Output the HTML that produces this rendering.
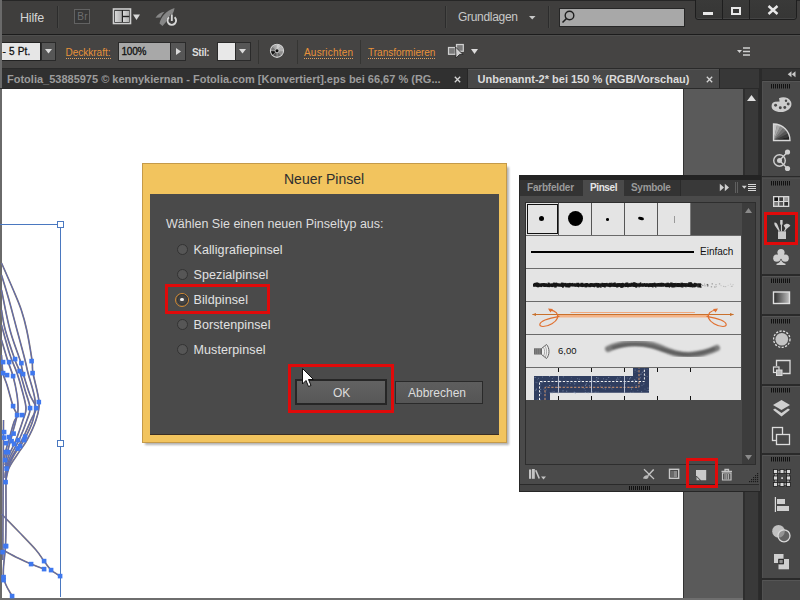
<!DOCTYPE html>
<html><head><meta charset="utf-8">
<style>
*{margin:0;padding:0;box-sizing:border-box}
html,body{width:800px;height:600px;overflow:hidden;background:#ffffff;font-family:"Liberation Sans",sans-serif;position:relative}
.a{position:absolute}
.t{position:absolute;white-space:nowrap;line-height:1}
svg{position:absolute;overflow:visible}
.ul{border-bottom:1px dotted #e0a060}
</style></head><body>
<!-- ============ MENU BAR ============ -->
<div class="a" style="left:0;top:0;width:800px;height:35px;background:#3f3e3d"></div>
<div class="a" style="left:0;top:0;width:800px;height:1px;background:#262626"></div>
<div class="a" style="left:0;top:34px;width:800px;height:1px;background:#1c1c1c"></div>
<div class="t" style="left:20px;top:12px;font-size:12.5px;color:#d4d4d4;letter-spacing:-0.2px">Hilfe</div>
<div class="a" style="left:57px;top:6px;width:1px;height:22px;background:#2c2c2c"></div>
<div class="a" style="left:58px;top:6px;width:1px;height:22px;background:#474745"></div>
<!-- Br -->
<div class="a" style="left:74px;top:9px;width:16px;height:15px;border:1px solid #626262;background:#373737"></div>
<div class="t" style="left:77.3px;top:12px;font-size:10px;color:#6e6e6e;letter-spacing:0.3px">Br</div>
<!-- layout icon -->
<svg style="left:0;top:0" width="200" height="34" viewBox="0 0 200 34">
<rect x="113.5" y="9" width="17" height="14.5" fill="#222" stroke="#cfcfcf" stroke-width="1.6"/>
<defs><linearGradient id="lp" x1="0" y1="0" x2="1" y2="0"><stop offset="0" stop-color="#d8d8d8"/><stop offset="1" stop-color="#b0b0b0"/></linearGradient></defs>
<rect x="115" y="10.8" width="6.8" height="11.2" fill="url(#lp)"/>
<rect x="123" y="10.8" width="6.2" height="5" fill="url(#lp)"/>
<rect x="123" y="17.2" width="6.2" height="4.8" fill="url(#lp)"/>
<path d="M133 14.5H140L136.5 20Z" fill="#d8d8d8"/>
<!-- rocket -->
<path d="M159.5 23.5 C161 17 165.5 11 174.5 8 C174 12.5 171 18 166 22 L162.5 26Z" fill="#868686"/>
<path d="M155.5 17.8 C157.5 14.5 160.5 12.5 164.5 11.8 C163 13.5 161.5 15.5 160.5 17.5Z" fill="#868686"/>
<circle cx="171.8" cy="21.3" r="5.6" fill="#3f3e3d"/>
<path d="M169 17.3 A4.3 4.3 0 1 0 174.6 17.3" fill="none" stroke="#d8d8d8" stroke-width="1.9"/>
<path d="M171.8 14.5V21" stroke="#3f3e3d" stroke-width="3.4"/>
<path d="M171.8 14.5V21" stroke="#d8d8d8" stroke-width="1.9"/>
</svg>
<!-- right side -->
<div class="a" style="left:445px;top:6px;width:1px;height:22px;background:#2c2c2c"></div>
<div class="a" style="left:446px;top:6px;width:1px;height:22px;background:#474745"></div>
<div class="t" style="left:458px;top:11px;font-size:12px;color:#c8c8c8;letter-spacing:-0.3px">Grundlagen</div>
<svg style="left:529px;top:16px" width="7" height="4"><path d="M0 0H6.5L3.25 3.5Z" fill="#c8c8c8"/></svg>
<div class="a" style="left:548px;top:6px;width:1px;height:22px;background:#2c2c2c"></div>
<div class="a" style="left:549px;top:6px;width:1px;height:22px;background:#474745"></div>
<div class="a" style="left:559px;top:8px;width:126px;height:19px;background:#a8a8a8;border:1px solid #262626"></div>
<svg style="left:561px;top:10px" width="16" height="15"><circle cx="8.5" cy="5.5" r="4.3" fill="none" stroke="#1e1e1e" stroke-width="1.4"/><path d="M5.5 8.5L1.5 12.5" stroke="#1e1e1e" stroke-width="1.6"/></svg>
<!-- window buttons -->
<div class="a" style="left:695px;top:-2px;width:102px;height:22px;background:linear-gradient(#3a3a39,#363635);border:1px solid #1e1e1e;border-radius:0 0 3px 3px;box-shadow:inset 0 -1px 0 #444"></div>
<div class="a" style="left:722px;top:0;width:1px;height:19px;background:#1e1e1e"></div>
<div class="a" style="left:749px;top:0;width:1px;height:19px;background:#1e1e1e"></div>
<div class="a" style="left:703px;top:12px;width:10px;height:3px;background:#e8e8e8"></div>
<div class="a" style="left:731px;top:7px;width:10px;height:8px;border:2px solid #e8e8e8"></div>
<svg style="left:767px;top:5px" width="12" height="10"><path d="M1.5 1L10.5 9M10.5 1L1.5 9" stroke="#e8e8e8" stroke-width="2.4"/></svg>

<!-- ============ CONTROL BAR ============ -->
<div class="a" style="left:0;top:35px;width:800px;height:33px;background:#454443;border-top:1px solid #4e4e4d"></div>
<div class="a" style="left:0;top:68px;width:800px;height:1px;background:#2a2a2a"></div>
<div class="a" style="left:0;top:42px;width:41px;height:19px;background:#e6e6e6;border:1px solid #222;border-left:none"></div>
<div class="t" style="left:2.5px;top:47px;font-size:10px;color:#111;-webkit-text-stroke:0.3px #111;letter-spacing:0.2px">- 5 Pt.</div>
<div class="a" style="left:41px;top:42px;width:15px;height:19px;background:#565656;border:1px solid #2a2a2a"></div>
<svg style="left:45px;top:49px" width="8" height="5"><path d="M0 0H7L3.5 4.5Z" fill="#dcdcdc"/></svg>
<div class="t ul" style="left:65.5px;top:47.9px;font-size:10px;color:#e8923a">Deckkraft:</div>
<div class="a" style="left:118px;top:42px;width:53px;height:19px;background:#a8a8a8;border:1px solid #2a2a2a"></div>
<div class="t" style="left:121.5px;top:47px;font-size:10px;color:#111;-webkit-text-stroke:0.3px #111;letter-spacing:-0.2px">100%</div>
<div class="a" style="left:170px;top:42px;width:16px;height:19px;background:#565656;border:1px solid #2a2a2a"></div>
<svg style="left:176px;top:48px" width="6" height="8"><path d="M0 0V7L5 3.5Z" fill="#dcdcdc"/></svg>
<div class="t" style="left:192px;top:47.9px;font-size:10px;color:#dcdcdc;font-weight:bold;letter-spacing:-0.3px">Stil:</div>
<div class="a" style="left:217px;top:42px;width:19px;height:19px;background:#e8e8e8;border:1px solid #2a2a2a"></div>
<div class="a" style="left:235px;top:42px;width:16px;height:19px;background:#565656;border:1px solid #2a2a2a"></div>
<svg style="left:239px;top:49px" width="8" height="5"><path d="M0 0H7L3.5 4.5Z" fill="#dcdcdc"/></svg>
<div class="a" style="left:258px;top:40px;width:1px;height:24px;background:#353533"></div>
<svg style="left:0;top:0" width="300" height="68" viewBox="0 0 300 68">
<defs><clipPath id="rcc"><circle cx="277" cy="50.8" r="6.3"/></clipPath></defs>
<circle cx="277" cy="50.8" r="7.2" fill="#2a2a2a"/>
<g clip-path="url(#rcc)">
<path d="M277 50.8L277 43L284 43Z" fill="#c8c8c8"/><path d="M277 50.8L284 43L285 51Z" fill="#b0b0b0"/>
<path d="M277 50.8L285 51L284 58Z" fill="#8c8c8c"/><path d="M277 50.8L284 58L277 59Z" fill="#6a6a6a"/>
<path d="M277 50.8L277 59L269 58Z" fill="#555"/><path d="M277 50.8L269 58L269 51Z" fill="#111"/>
<path d="M277 50.8L269 51L270 43Z" fill="#777"/><path d="M277 50.8L270 43L277 43Z" fill="#a8a8a8"/>
</g>
<g stroke="#e0e0e0" stroke-width="0.6" stroke-opacity="0.7"><path d="M277 44.5V57M270.7 50.8H283.3M272.5 46.3L281.5 55.3M281.5 46.3L272.5 55.3"/></g>
<circle cx="277" cy="50.8" r="6.6" fill="none" stroke="#d4d4d4" stroke-width="1.1"/>
<circle cx="277" cy="50.8" r="2" fill="#111" stroke="#ddd" stroke-width="0.8"/>
</svg>
<div class="a" style="left:297px;top:40px;width:1px;height:24px;background:#353533"></div>
<div class="t ul" style="left:304px;top:47.9px;font-size:10px;color:#e8923a;letter-spacing:0.2px">Ausrichten</div>
<div class="a" style="left:360px;top:40px;width:1px;height:24px;background:#353533"></div>
<div class="t ul" style="left:368px;top:47.9px;font-size:10px;color:#e8923a">Transformieren</div>
<svg style="left:0;top:0" width="500" height="68" viewBox="0 0 500 68">
<rect x="448.5" y="47.5" width="6.8" height="6.8" fill="#7a7a7a" stroke="#d0d0d0" stroke-width="1.2"/>
<rect x="456.5" y="44.5" width="6.8" height="6.8" fill="#7a7a7a" stroke="#d0d0d0" stroke-width="1.2"/>
<path d="M455.5 47 L463 54.5 L459.5 54.5 L456 58 Z" fill="#d0d0d0" stroke="#222" stroke-width="0.8"/>
</svg>
<svg style="left:471px;top:49px" width="8" height="6"><path d="M0 0H7L3.5 5Z" fill="#dcdcdc"/></svg>
<svg style="left:737px;top:47px" width="14" height="10" viewBox="0 0 14 10"><path d="M0 3H5L2.5 6Z" fill="#d0d0d0"/><path d="M6 1H13M6 4.5H13M6 8H13" stroke="#d0d0d0" stroke-width="1.3"/></svg>

<!-- ============ TAB BAR ============ -->
<div class="a" style="left:0;top:69px;width:762px;height:19px;background:#373737"></div>
<div class="a" style="left:0;top:69px;width:467px;height:19px;background:#303030"></div>
<div class="a" style="left:467px;top:69px;width:1px;height:19px;background:#262626"></div>
<div class="a" style="left:468px;top:69px;width:251px;height:19px;background:#484848;border-top:1px solid #525252"></div>
<div class="a" style="left:719px;top:69px;width:1px;height:19px;background:#262626"></div>
<div class="t" style="left:7px;top:74px;font-size:11px;color:#9c9c9c;font-weight:bold">Fotolia_53885975 © kennykiernan - Fotolia.com [Konvertiert].eps bei 66,67 % (RG...</div>
<svg style="left:453.5px;top:75.5px" width="8" height="7"><path d="M0.8 0.8L6.2 6.2M6.2 0.8L0.8 6.2" stroke="#d4d4d4" stroke-width="1.3"/></svg>
<div class="t" style="left:477.5px;top:74px;font-size:11px;color:#dcdcdc;font-weight:bold">Unbenannt-2* bei 150 % (RGB/Vorschau)</div>
<svg style="left:705.5px;top:75.5px" width="8" height="7"><path d="M0.8 0.8L6.2 6.2M6.2 0.8L0.8 6.2" stroke="#d4d4d4" stroke-width="1.3"/></svg>

<!-- ============ CANVAS ============ -->
<div class="a" style="left:0;top:89px;width:684px;height:511px;background:#ffffff"></div>
<div class="a" style="left:0;top:0;width:2px;height:600px;background:#6a6a6a"></div>
<div class="a" style="left:683px;top:89px;width:60px;height:511px;background:#5a5a5a"></div><div class="a" style="left:683px;top:89px;width:1px;height:511px;background:#333"></div>
<div class="a" style="left:743px;top:89px;width:16px;height:511px;background:#393939;border-left:2px solid #2e2e2e;border-right:1px solid #2c2c2c"></div><div class="a" style="left:0;top:88px;width:759px;height:1px;background:#2a2a2a"></div>
<svg style="left:747px;top:95px" width="10" height="7"><path d="M0 6H9L4.5 0Z" fill="#e0e0e0"/></svg>
<div class="a" style="left:759px;top:68px;width:3px;height:532px;background:#2b2b2b"></div>
<div class="a" style="left:0;top:598px;width:743px;height:2px;background:#6e6e6e"></div>

<!-- ============ RIGHT PANEL ============ -->
<svg style="left:0;top:0" width="800" height="600" viewBox="0 0 800 600">
<rect x="759" y="68" width="41" height="532" fill="#2a2a2a"/>
<rect x="762" y="69" width="38" height="11" fill="#333"/>
<path d="M791.5 71.3V77.3L787.7 74.3Z M795.5 71.3V77.3L791.7 74.3Z" fill="#c8c8c8"/>
<rect x="762" y="81" width="38" height="95" fill="#484848"/><rect x="762" y="81" width="38" height="1" fill="#555"/><rect x="762" y="81" width="1" height="95" fill="#505050"/>
<rect x="762" y="177.5" width="38" height="96.5" fill="#484848"/><rect x="762" y="177.5" width="38" height="1" fill="#555"/><rect x="762" y="177.5" width="1" height="96.5" fill="#505050"/>
<rect x="762" y="276" width="38" height="38" fill="#484848"/><rect x="762" y="276" width="38" height="1" fill="#555"/><rect x="762" y="276" width="1" height="38" fill="#505050"/>
<rect x="762" y="316" width="38" height="68" fill="#484848"/><rect x="762" y="316" width="38" height="1" fill="#555"/><rect x="762" y="316" width="1" height="68" fill="#505050"/>
<rect x="762" y="386" width="38" height="67" fill="#484848"/><rect x="762" y="386" width="38" height="1" fill="#555"/><rect x="762" y="386" width="1" height="67" fill="#505050"/>
<rect x="762" y="455" width="38" height="123" fill="#484848"/><rect x="762" y="455" width="38" height="1" fill="#555"/><rect x="762" y="455" width="1" height="123" fill="#505050"/>
<rect x="762" y="580" width="38" height="20" fill="#484848"/><rect x="762" y="580" width="38" height="1" fill="#555"/><rect x="762" y="580" width="1" height="20" fill="#505050"/>
<rect x="771" y="84" width="1" height="4.5" fill="#111"/><rect x="773" y="84" width="1" height="4.5" fill="#111"/><rect x="775" y="84" width="1" height="4.5" fill="#111"/><rect x="777" y="84" width="1" height="4.5" fill="#111"/><rect x="779" y="84" width="1" height="4.5" fill="#111"/><rect x="781" y="84" width="1" height="4.5" fill="#111"/><rect x="783" y="84" width="1" height="4.5" fill="#111"/><rect x="785" y="84" width="1" height="4.5" fill="#111"/><rect x="787" y="84" width="1" height="4.5" fill="#111"/><rect x="789" y="84" width="1" height="4.5" fill="#111"/>
<rect x="771" y="181" width="1" height="4.5" fill="#111"/><rect x="773" y="181" width="1" height="4.5" fill="#111"/><rect x="775" y="181" width="1" height="4.5" fill="#111"/><rect x="777" y="181" width="1" height="4.5" fill="#111"/><rect x="779" y="181" width="1" height="4.5" fill="#111"/><rect x="781" y="181" width="1" height="4.5" fill="#111"/><rect x="783" y="181" width="1" height="4.5" fill="#111"/><rect x="785" y="181" width="1" height="4.5" fill="#111"/><rect x="787" y="181" width="1" height="4.5" fill="#111"/><rect x="789" y="181" width="1" height="4.5" fill="#111"/>
<rect x="771" y="278.5" width="1" height="4.5" fill="#111"/><rect x="773" y="278.5" width="1" height="4.5" fill="#111"/><rect x="775" y="278.5" width="1" height="4.5" fill="#111"/><rect x="777" y="278.5" width="1" height="4.5" fill="#111"/><rect x="779" y="278.5" width="1" height="4.5" fill="#111"/><rect x="781" y="278.5" width="1" height="4.5" fill="#111"/><rect x="783" y="278.5" width="1" height="4.5" fill="#111"/><rect x="785" y="278.5" width="1" height="4.5" fill="#111"/><rect x="787" y="278.5" width="1" height="4.5" fill="#111"/><rect x="789" y="278.5" width="1" height="4.5" fill="#111"/>
<rect x="771" y="319" width="1" height="4.5" fill="#111"/><rect x="773" y="319" width="1" height="4.5" fill="#111"/><rect x="775" y="319" width="1" height="4.5" fill="#111"/><rect x="777" y="319" width="1" height="4.5" fill="#111"/><rect x="779" y="319" width="1" height="4.5" fill="#111"/><rect x="781" y="319" width="1" height="4.5" fill="#111"/><rect x="783" y="319" width="1" height="4.5" fill="#111"/><rect x="785" y="319" width="1" height="4.5" fill="#111"/><rect x="787" y="319" width="1" height="4.5" fill="#111"/><rect x="789" y="319" width="1" height="4.5" fill="#111"/>
<rect x="771" y="388" width="1" height="4.5" fill="#111"/><rect x="773" y="388" width="1" height="4.5" fill="#111"/><rect x="775" y="388" width="1" height="4.5" fill="#111"/><rect x="777" y="388" width="1" height="4.5" fill="#111"/><rect x="779" y="388" width="1" height="4.5" fill="#111"/><rect x="781" y="388" width="1" height="4.5" fill="#111"/><rect x="783" y="388" width="1" height="4.5" fill="#111"/><rect x="785" y="388" width="1" height="4.5" fill="#111"/><rect x="787" y="388" width="1" height="4.5" fill="#111"/><rect x="789" y="388" width="1" height="4.5" fill="#111"/>
<rect x="771" y="457" width="1" height="4.5" fill="#111"/><rect x="773" y="457" width="1" height="4.5" fill="#111"/><rect x="775" y="457" width="1" height="4.5" fill="#111"/><rect x="777" y="457" width="1" height="4.5" fill="#111"/><rect x="779" y="457" width="1" height="4.5" fill="#111"/><rect x="781" y="457" width="1" height="4.5" fill="#111"/><rect x="783" y="457" width="1" height="4.5" fill="#111"/><rect x="785" y="457" width="1" height="4.5" fill="#111"/><rect x="787" y="457" width="1" height="4.5" fill="#111"/><rect x="789" y="457" width="1" height="4.5" fill="#111"/>

<!-- palette -->
<path d="M779 98.3 C783 96.3 789 97.3 791 101.8 C792.6 106 790 110.5 783 111.9 C776 112.6 771.4 110 771.6 106 C771.7 103.5 773 102 775 101.8 L779.6 101.5 Z" fill="#cdcdcd"/>
<circle cx="775.6" cy="105.2" r="1.45" fill="#4a4a4a"/><circle cx="780.3" cy="107.7" r="1.45" fill="#4a4a4a"/><circle cx="784.8" cy="107.5" r="1.45" fill="#4a4a4a"/><circle cx="788.2" cy="104" r="1.45" fill="#4a4a4a"/><circle cx="786" cy="100.8" r="1.2" fill="#4a4a4a"/>
<!-- gradient quarter -->
<defs><linearGradient id="gq" x1="0" y1="1" x2="1" y2="0"><stop offset="0" stop-color="#111"/><stop offset="1" stop-color="#c8c8c8"/></linearGradient>
<linearGradient id="gr" x1="0" y1="0" x2="1" y2="0"><stop offset="0" stop-color="#2a2a2a"/><stop offset="1" stop-color="#c0c0c0"/></linearGradient></defs>
<path d="M773.5 140.5L790.00 140.50A16.5 16.5 0 0 0 789.59 136.83Z" fill="#222"/><path d="M773.5 140.5L789.59 136.83A16.5 16.5 0 0 0 788.37 133.34Z" fill="#3a3a3a"/><path d="M773.5 140.5L788.37 133.34A16.5 16.5 0 0 0 786.40 130.21Z" fill="#555"/><path d="M773.5 140.5L786.40 130.21A16.5 16.5 0 0 0 783.79 127.60Z" fill="#707070"/><path d="M773.5 140.5L783.79 127.60A16.5 16.5 0 0 0 780.66 125.63Z" fill="#8a8a8a"/><path d="M773.5 140.5L780.66 125.63A16.5 16.5 0 0 0 777.17 124.41Z" fill="#a8a8a8"/><path d="M773.5 140.5L777.17 124.41A16.5 16.5 0 0 0 773.50 124.00Z" fill="#c4c4c4"/><path d="M773.5 124V140.5H790 A16.5 16.5 0 0 0 773.5 124Z" fill="none" stroke="#d8d8d8" stroke-width="1.3"/>
<!-- graphic styles / symbol -->
<circle cx="779.5" cy="160.5" r="5.8" fill="none" stroke="#cfcfcf" stroke-width="1.4"/>
<circle cx="779.5" cy="160.5" r="2.5" fill="#cfcfcf"/>
<path d="M779.5 160.5L787.5 152M779.5 160.5L787.5 168.5" stroke="#cfcfcf" stroke-width="1.4"/>
<circle cx="787.5" cy="152" r="2.6" fill="#cfcfcf"/><circle cx="787.5" cy="168.5" r="2.6" fill="#cfcfcf"/>
<!-- swatches -->
<rect x="773" y="196" width="16.3" height="11" fill="#d6d6d6"/>
<rect x="774.3" y="197.3" width="3.7" height="3.7" fill="#141414"/><rect x="779.3" y="197.3" width="3.7" height="3.7" fill="#3a3a3a"/><rect x="784.3" y="197.3" width="3.7" height="3.7" fill="#9a9a9a"/>
<rect x="774.3" y="202" width="3.7" height="3.7" fill="#7a7a7a"/><rect x="779.3" y="202" width="3.7" height="3.7" fill="#555"/><rect x="784.3" y="202" width="3.7" height="3.7" fill="#303030"/>
<!-- brush selected -->
<rect x="765.5" y="213.5" width="31" height="30" fill="#353535" stroke="#e00a0a" stroke-width="3"/>
<rect x="778" y="231.3" width="8" height="7.7" fill="#c8c8c8"/>
<rect x="780.2" y="220" width="2.4" height="4.6" fill="#d0d0d0"/><rect x="780.9" y="224" width="1.1" height="7.5" fill="#c8c8c8"/>
<path d="M774.5 222.5 C776 222 777.5 224 778 226 L779.8 230.8 L778.8 231.2 L775.5 226.5 C774.5 225 774 223.5 774.5 222.5Z" fill="#cdcdcd"/>
<path d="M784 231 L785.3 228.3 L783.6 225.3 C786 223 789 223.2 790.4 225.8 L786.5 229 L785 231.2Z" fill="#cdcdcd"/>
<!-- club -->
<circle cx="781" cy="252.6" r="3.6" fill="#cdcdcd"/><circle cx="776.8" cy="258.2" r="3.6" fill="#cdcdcd"/><circle cx="785.2" cy="258.2" r="3.6" fill="#cdcdcd"/>
<circle cx="781" cy="256.5" r="2.5" fill="#cdcdcd"/>
<path d="M781 258 C781.2 261 779.5 263.3 776.5 263.8 L776.5 264.9 H785.5 V263.8 C782.5 263.3 780.8 261 781 258Z" fill="#cdcdcd"/>
<!-- gradient rect -->
<rect x="773.5" y="292" width="16" height="11.5" fill="url(#gr)" stroke="#e0e0e0" stroke-width="1.4"/>
<!-- dashed circle -->
<circle cx="781.8" cy="339.2" r="6.3" fill="#c4c4c4"/>
<circle cx="781.8" cy="339.2" r="8.2" fill="none" stroke="#dcdcdc" stroke-width="1.3" stroke-dasharray="2.2 1.4"/>
<!-- appearance -->
<path d="M776.5 366V360.5H790V373.5H782.5" fill="none" stroke="#dcdcdc" stroke-width="1.3"/>
<rect x="773.5" y="367" width="5.5" height="5.5" fill="none" stroke="#dcdcdc" stroke-width="1.2"/>
<rect x="776.5" y="370" width="5.5" height="5.5" fill="#bbb" stroke="#dcdcdc" stroke-width="1"/>
<!-- layers -->
<path d="M781.5 400 L790 405 L781.5 410 L773 405Z" fill="#cfcfcf"/>
<path d="M775 408.5 L773 409.7 L781.5 416.5 L790 409.7 L788 408.5 L781.5 413Z" fill="#cfcfcf"/>
<!-- artboards -->
<rect x="772.5" y="427.5" width="10" height="13" fill="none" stroke="#dcdcdc" stroke-width="1.3"/>
<rect x="776.5" y="434.5" width="13" height="10" fill="#484848" stroke="#dcdcdc" stroke-width="1.3"/>
<!-- transform -->
<rect x="777" y="473" width="10" height="10" fill="#444" stroke="#1a1a1a" stroke-width="1"/>
<rect x="776" y="472" width="12" height="12" fill="none" stroke="#d8d8d8" stroke-width="1.1"/>
<rect x="773.5" y="469.5" width="4" height="4" fill="#d8d8d8" stroke="#1a1a1a" stroke-width="0.8"/><rect x="773.5" y="476.0" width="4" height="4" fill="#d8d8d8" stroke="#1a1a1a" stroke-width="0.8"/><rect x="773.5" y="482.5" width="4" height="4" fill="#d8d8d8" stroke="#1a1a1a" stroke-width="0.8"/><rect x="780.0" y="469.5" width="4" height="4" fill="#d8d8d8" stroke="#1a1a1a" stroke-width="0.8"/><rect x="780.0" y="482.5" width="4" height="4" fill="#d8d8d8" stroke="#1a1a1a" stroke-width="0.8"/><rect x="786.5" y="469.5" width="4" height="4" fill="#d8d8d8" stroke="#1a1a1a" stroke-width="0.8"/><rect x="786.5" y="476.0" width="4" height="4" fill="#d8d8d8" stroke="#1a1a1a" stroke-width="0.8"/><rect x="786.5" y="482.5" width="4" height="4" fill="#d8d8d8" stroke="#1a1a1a" stroke-width="0.8"/>
<rect x="781.3" y="477.3" width="1.6" height="1.6" fill="#eee"/>
<!-- align -->
<rect x="774.8" y="497" width="1.2" height="15" fill="#dcdcdc"/>
<rect x="777" y="499" width="8" height="5" fill="#cfcfcf"/><rect x="777" y="506" width="12" height="5" fill="#cfcfcf"/>
<!-- transparency -->
<circle cx="778.5" cy="531.3" r="6.3" fill="#c0c0c0"/>
<circle cx="784" cy="535.8" r="6" fill="#777" fill-opacity="0.6" stroke="#d8d8d8" stroke-width="1.3"/>
<!-- pathfinder -->
<rect x="774" y="554" width="9.5" height="9" fill="#cfcfcf"/>
<rect x="778.5" y="559" width="10.5" height="10.3" fill="#cfcfcf"/>
<rect x="778.8" y="559.3" width="4.5" height="4.5" fill="#8e8e8e" stroke="#111" stroke-width="1"/>
</svg>


<!-- ============ ARTWORK ============ -->
<svg style="left:0;top:0" width="684" height="600" viewBox="0 0 684 600">
<path d="M0 224.5H60.5V597" fill="none" stroke="#4a78c0" stroke-width="1"/>
<g fill="none" stroke="#8c7f72" stroke-width="1.7"><path d="M1.5 275 C2.8 279.2 6.4 290.8 9 300 C11.6 309.2 14.3 320.0 17 330 C19.7 340.0 23.2 352.8 25 360 C26.8 367.2 26.3 366.3 28 373 C29.7 379.7 34.2 392.2 35 400 C35.8 407.8 34.8 413.3 33 420 C31.2 426.7 27.2 434.2 24 440 C20.8 445.8 16.8 450.0 14 455 C11.2 460.0 8.2 467.5 7 470"/><path d="M1.5 325 C2.9 330.0 7.4 347.0 10 355 C12.6 363.0 15.0 367.2 17 373 C19.0 378.8 20.5 384.2 22 390 C23.5 395.8 25.8 403.0 26 408 C26.2 413.0 24.7 414.7 23 420 C21.3 425.3 18.3 434.2 16 440 C13.7 445.8 10.8 450.3 9 455 C7.2 459.7 5.7 465.8 5 468"/><path d="M1.5 263 C3.5 267.5 10.0 282.2 13.3 290 C16.6 297.8 19.1 303.3 21.3 310 C23.5 316.7 24.9 321.7 26.7 330 C28.5 338.3 30.9 352.8 32 360 C33.0 367.2 31.8 366.0 33 373 C34.2 380.0 38.5 394.2 39 402 C39.5 409.8 38.0 413.7 36 420 C34.0 426.3 30.2 434.2 27 440 C23.8 445.8 20.0 450.3 17 455 C14.0 459.7 10.9 463.5 9 468 C7.1 472.5 6.1 479.7 5.5 482"/><path d="M1.5 290 C2.9 296.7 6.9 318.3 10 330 C13.1 341.7 17.8 352.8 20 360 C22.2 367.2 21.3 367.2 23 373 C24.7 378.8 27.8 389.2 30 395 C32.2 400.8 35.8 403.8 36 408 C36.2 412.2 33.3 414.7 31 420 C28.7 425.3 25.0 434.2 22 440 C19.0 445.8 15.7 450.0 13 455 C10.3 460.0 7.3 466.2 6 470 C4.7 473.8 5.2 476.7 5 478"/><path d="M1.5 310 C2.1 313.3 3.0 321.7 5.3 330 C7.5 338.3 12.6 353.2 15 360 C17.4 366.8 17.8 366.0 19.5 371 C21.2 376.0 23.2 383.8 25 390 C26.8 396.2 29.7 403.0 30 408 C30.3 413.0 28.8 414.7 27 420 C25.2 425.3 21.7 434.2 19 440 C16.3 445.8 13.2 450.3 11 455 C8.8 459.7 6.8 465.8 6 468"/><path d="M1.5 340 C2.5 343.3 5.6 354.0 7.5 360 C9.4 366.0 11.4 370.2 13 376 C14.6 381.8 16.2 389.3 17 395 C17.8 400.7 18.2 405.8 18 410 C17.8 414.2 17.0 415.8 16 420 C15.0 424.2 13.3 430.0 12 435 C10.7 440.0 9.2 445.0 8 450 C6.8 455.0 5.5 462.5 5 465"/><path d="M1.5 355 C1.8 358.0 2.1 368.0 3 373 C3.9 378.0 5.3 379.5 7 385 C8.7 390.5 11.3 401.0 13 406 C14.7 411.0 16.8 412.3 17 415 C17.2 417.7 15.2 418.5 14 422 C12.8 425.5 11.3 431.3 10 436 C8.7 440.7 7.0 445.7 6 450 C5.0 454.3 4.3 460.0 4 462"/><path d="M7 470 C6.8 472.0 6.2 473.7 6 482 C5.8 490.3 6.1 509.3 6 520 C5.9 530.7 5.9 536.5 5.5 546 C5.1 555.5 2.4 568.7 3.5 577 C4.6 585.3 10.6 592.8 12 596"/><path d="M3.5 420 C3.5 428.3 3.3 453.3 3.2 470 C3.1 486.7 3.1 505.0 3 520 C2.9 535.0 2.8 553.3 2.8 560"/><path d="M1.5 514 C4.6 517.2 14.2 527.0 20 533 C25.8 539.0 32.0 545.3 36 550 C40.0 554.7 41.5 557.7 44 561 C46.5 564.3 48.3 567.5 51 570 C53.7 572.5 58.5 575.0 60 576"/><path d="M3 550 C5.5 551.3 13.3 555.7 18 558 C22.7 560.3 26.7 562.2 31 564 C35.3 565.8 41.8 568.2 44 569"/></g>
<g fill="none" stroke="#5a68b4" stroke-width="1"><path d="M1.5 275 C2.8 279.2 6.4 290.8 9 300 C11.6 309.2 14.3 320.0 17 330 C19.7 340.0 23.2 352.8 25 360 C26.8 367.2 26.3 366.3 28 373 C29.7 379.7 34.2 392.2 35 400 C35.8 407.8 34.8 413.3 33 420 C31.2 426.7 27.2 434.2 24 440 C20.8 445.8 16.8 450.0 14 455 C11.2 460.0 8.2 467.5 7 470"/><path d="M1.5 325 C2.9 330.0 7.4 347.0 10 355 C12.6 363.0 15.0 367.2 17 373 C19.0 378.8 20.5 384.2 22 390 C23.5 395.8 25.8 403.0 26 408 C26.2 413.0 24.7 414.7 23 420 C21.3 425.3 18.3 434.2 16 440 C13.7 445.8 10.8 450.3 9 455 C7.2 459.7 5.7 465.8 5 468"/><path d="M1.5 263 C3.5 267.5 10.0 282.2 13.3 290 C16.6 297.8 19.1 303.3 21.3 310 C23.5 316.7 24.9 321.7 26.7 330 C28.5 338.3 30.9 352.8 32 360 C33.0 367.2 31.8 366.0 33 373 C34.2 380.0 38.5 394.2 39 402 C39.5 409.8 38.0 413.7 36 420 C34.0 426.3 30.2 434.2 27 440 C23.8 445.8 20.0 450.3 17 455 C14.0 459.7 10.9 463.5 9 468 C7.1 472.5 6.1 479.7 5.5 482"/><path d="M1.5 290 C2.9 296.7 6.9 318.3 10 330 C13.1 341.7 17.8 352.8 20 360 C22.2 367.2 21.3 367.2 23 373 C24.7 378.8 27.8 389.2 30 395 C32.2 400.8 35.8 403.8 36 408 C36.2 412.2 33.3 414.7 31 420 C28.7 425.3 25.0 434.2 22 440 C19.0 445.8 15.7 450.0 13 455 C10.3 460.0 7.3 466.2 6 470 C4.7 473.8 5.2 476.7 5 478"/><path d="M1.5 310 C2.1 313.3 3.0 321.7 5.3 330 C7.5 338.3 12.6 353.2 15 360 C17.4 366.8 17.8 366.0 19.5 371 C21.2 376.0 23.2 383.8 25 390 C26.8 396.2 29.7 403.0 30 408 C30.3 413.0 28.8 414.7 27 420 C25.2 425.3 21.7 434.2 19 440 C16.3 445.8 13.2 450.3 11 455 C8.8 459.7 6.8 465.8 6 468"/><path d="M1.5 340 C2.5 343.3 5.6 354.0 7.5 360 C9.4 366.0 11.4 370.2 13 376 C14.6 381.8 16.2 389.3 17 395 C17.8 400.7 18.2 405.8 18 410 C17.8 414.2 17.0 415.8 16 420 C15.0 424.2 13.3 430.0 12 435 C10.7 440.0 9.2 445.0 8 450 C6.8 455.0 5.5 462.5 5 465"/><path d="M1.5 355 C1.8 358.0 2.1 368.0 3 373 C3.9 378.0 5.3 379.5 7 385 C8.7 390.5 11.3 401.0 13 406 C14.7 411.0 16.8 412.3 17 415 C17.2 417.7 15.2 418.5 14 422 C12.8 425.5 11.3 431.3 10 436 C8.7 440.7 7.0 445.7 6 450 C5.0 454.3 4.3 460.0 4 462"/><path d="M7 470 C6.8 472.0 6.2 473.7 6 482 C5.8 490.3 6.1 509.3 6 520 C5.9 530.7 5.9 536.5 5.5 546 C5.1 555.5 2.4 568.7 3.5 577 C4.6 585.3 10.6 592.8 12 596"/><path d="M3.5 420 C3.5 428.3 3.3 453.3 3.2 470 C3.1 486.7 3.1 505.0 3 520 C2.9 535.0 2.8 553.3 2.8 560"/><path d="M1.5 514 C4.6 517.2 14.2 527.0 20 533 C25.8 539.0 32.0 545.3 36 550 C40.0 554.7 41.5 557.7 44 561 C46.5 564.3 48.3 567.5 51 570 C53.7 572.5 58.5 575.0 60 576"/><path d="M3 550 C5.5 551.3 13.3 555.7 18 558 C22.7 560.3 26.7 562.2 31 564 C35.3 565.8 41.8 568.2 44 569"/></g>
<g fill="#3f78ee"><rect x="29.3" y="358.8" width="4.6" height="4.6"/><rect x="30.3" y="370.8" width="4.6" height="4.6"/><rect x="12.8" y="356.8" width="4.6" height="4.6"/><rect x="19.1" y="360.8" width="4.6" height="4.6"/><rect x="0.8" y="359.8" width="4.6" height="4.6"/><rect x="6.8" y="359.8" width="4.6" height="4.6"/><rect x="0.8" y="370.8" width="4.6" height="4.6"/><rect x="4.8" y="372.8" width="4.6" height="4.6"/><rect x="10.8" y="373.8" width="4.6" height="4.6"/><rect x="17.3" y="368.8" width="4.6" height="4.6"/><rect x="20.8" y="371.8" width="4.6" height="4.6"/><rect x="36.5" y="399.8" width="4.6" height="4.6"/><rect x="10.8" y="403.8" width="4.6" height="4.6"/><rect x="27.8" y="405.8" width="4.6" height="4.6"/><rect x="33.8" y="405.8" width="4.6" height="4.6"/><rect x="14.8" y="412.8" width="4.6" height="4.6"/><rect x="19.8" y="412.8" width="4.6" height="4.6"/><rect x="11.3" y="431.3" width="4.6" height="4.6"/><rect x="1.8" y="435.3" width="4.6" height="4.6"/><rect x="9.3" y="438.8" width="4.6" height="4.6"/><rect x="22.8" y="434.3" width="4.6" height="4.6"/><rect x="21.8" y="437.8" width="4.6" height="4.6"/><rect x="15.3" y="446.3" width="4.6" height="4.6"/><rect x="17.8" y="443.8" width="4.6" height="4.6"/><rect x="3.8" y="449.8" width="4.6" height="4.6"/><rect x="4.3" y="466.3" width="4.6" height="4.6"/><rect x="3.3" y="479.8" width="4.6" height="4.6"/><rect x="3.3" y="543.8" width="4.6" height="4.6"/><rect x="1.8" y="429.8" width="4.6" height="4.6"/><rect x="6.8" y="434.8" width="4.6" height="4.6"/><rect x="3.8" y="440.8" width="4.6" height="4.6"/><rect x="11.8" y="441.8" width="4.6" height="4.6"/><rect x="5.8" y="449.8" width="4.6" height="4.6"/><rect x="2.8" y="457.8" width="4.6" height="4.6"/><rect x="15.8" y="437.8" width="4.6" height="4.6"/><rect x="41.8" y="558.8" width="4.6" height="4.6"/><rect x="48.8" y="567.8" width="4.6" height="4.6"/><rect x="57.8" y="573.8" width="4.6" height="4.6"/><rect x="28.8" y="561.8" width="4.6" height="4.6"/><rect x="41.8" y="566.8" width="4.6" height="4.6"/><rect x="3.8" y="543.8" width="4.6" height="4.6"/><rect x="0.3" y="549.8" width="4.6" height="4.6"/><rect x="1.3" y="574.8" width="4.6" height="4.6"/><rect x="1.3" y="577.8" width="4.6" height="4.6"/><rect x="9.8" y="593.8" width="4.6" height="4.6"/></g>
<rect x="57.5" y="221.5" width="6" height="6" fill="#fff" stroke="#4a78c0" stroke-width="1"/>
<rect x="57.5" y="440.5" width="6" height="6" fill="#fff" stroke="#4a78c0" stroke-width="1"/>
</svg>

<!-- ============ DIALOG ============ -->
<div class="a" style="left:145px;top:167px;width:364px;height:278px;background:rgba(0,0,0,0.3);filter:blur(0.8px)"></div>
<div class="a" style="left:142px;top:163px;width:365px;height:280px;background:#f2c45e;border:1px solid #c49a4a"></div>
<div class="a" style="left:150px;top:194px;width:349px;height:241px;background:#4a4a4a;border-bottom:1px solid #3a2e24"></div>
<div class="t" style="left:284px;top:172px;font-size:14px;color:#2e2e2e">Neuer Pinsel</div>
<div class="t" style="left:166px;top:218px;font-size:12.5px;color:#dedede;letter-spacing:0px">Wählen Sie einen neuen Pinseltyp aus:</div>
<!-- radios -->
<div class="a" style="left:176.5px;top:243.5px;width:11px;height:11px;border-radius:50%;background:#565656;border:1px solid #333"></div>
<div class="a" style="left:176.5px;top:268.5px;width:11px;height:11px;border-radius:50%;background:#565656;border:1px solid #333"></div>
<div class="a" style="left:175px;top:292.5px;width:14px;height:14px;border-radius:50%;background:#4a4a4a;border:1.3px solid #d48a30"></div>
<div class="a" style="left:176.5px;top:294px;width:11px;height:11px;border-radius:50%;background:#444;border:1px solid #333"></div>
<div class="a" style="left:180.2px;top:297.7px;width:3.6px;height:3.6px;border-radius:50%;background:#eee"></div>
<div class="a" style="left:176.5px;top:318.5px;width:11px;height:11px;border-radius:50%;background:#565656;border:1px solid #333"></div>
<div class="a" style="left:176.5px;top:343.5px;width:11px;height:11px;border-radius:50%;background:#565656;border:1px solid #333"></div>
<div class="t" style="left:193.5px;top:244px;font-size:12.5px;color:#e2e2e2;letter-spacing:0.1px">Kalligrafiepinsel</div>
<div class="t" style="left:193.5px;top:269px;font-size:12.5px;color:#e2e2e2;letter-spacing:0.1px">Spezialpinsel</div>
<div class="t" style="left:193.5px;top:294px;font-size:12.5px;color:#e2e2e2;letter-spacing:0.1px">Bildpinsel</div>
<div class="t" style="left:193.5px;top:319px;font-size:12.5px;color:#e2e2e2;letter-spacing:0.1px">Borstenpinsel</div>
<div class="t" style="left:193.5px;top:344px;font-size:12.5px;color:#e2e2e2;letter-spacing:0.1px">Musterpinsel</div>
<!-- red box bildpinsel -->
<div class="a" style="left:165px;top:284px;width:105px;height:30px;border:3px solid #e00a0a"></div>
<!-- buttons -->
<div class="a" style="left:295px;top:379px;width:92px;height:26px;border:2px solid #262626;background:linear-gradient(#626262,#575757)"></div>
<div class="t" style="left:333px;top:386.5px;font-size:12px;color:#dcdcdc">OK</div>
<div class="a" style="left:395px;top:381px;width:88px;height:23px;border:1px solid #2a2a2a;background:linear-gradient(#5e5e5e,#555)"></div>
<div class="t" style="left:408px;top:386.5px;font-size:12px;color:#dcdcdc">Abbrechen</div>
<div class="a" style="left:288px;top:364px;width:106px;height:49px;border:3px solid #e00a0a"></div>
<!-- cursor -->
<svg style="left:302px;top:368px" width="13" height="20" viewBox="0 0 13 20">
<path d="M0.5 0.5V16L4 12.5L6.5 18.5L9 17.5L6.5 11.5H11.5Z" fill="#fff" stroke="#111" stroke-width="1"/>
</svg>

<!-- ============ BRUSHES PANEL ============ -->
<div class="a" style="left:519px;top:175px;width:242px;height:317px;background:#4a4a4a;border:1px solid #262626"></div>
<div class="a" style="left:519px;top:175px;width:242px;height:5px;background:#232323"></div>
<div class="a" style="left:520px;top:180px;width:240px;height:16px;background:#393939"></div>
<div class="a" style="left:520px;top:180px;width:63px;height:16px;background:#333"></div>
<div class="a" style="left:583px;top:180px;width:41px;height:17px;background:#4a4a4a"></div>
<div class="a" style="left:624px;top:180px;width:56px;height:16px;background:#333"></div>
<div class="a" style="left:680px;top:180px;width:1px;height:16px;background:#2a2a2a"></div>
<div class="t" style="left:527px;top:182.5px;font-size:10px;font-weight:bold;color:#9a9a9a;letter-spacing:-0.2px">Farbfelder</div>
<div class="t" style="left:590px;top:182.5px;font-size:10px;font-weight:bold;color:#e6e6e6;letter-spacing:-0.4px">Pinsel</div>
<div class="t" style="left:631px;top:182.5px;font-size:10px;font-weight:bold;color:#9a9a9a;letter-spacing:-0.3px">Symbole</div>
<svg style="left:0;top:0" width="800" height="600" viewBox="0 0 800 600"><path d="M719.8 183.8V191.3L724 187.5ZM724.8 183.8V191.3L729 187.5Z" fill="#cfcfcf"/><rect x="735" y="182" width="1" height="11" fill="#606060"/><rect x="737" y="182" width="1" height="11" fill="#606060"/><path d="M741.8 185.7H746.8L744.3 188.8Z" fill="#cfcfcf"/><rect x="748" y="184" width="8" height="1" fill="#d8d8d8"/><rect x="748" y="186" width="8" height="1" fill="#d8d8d8"/><rect x="748" y="188" width="8" height="1" fill="#d8d8d8"/><rect x="748" y="190" width="8" height="1" fill="#d8d8d8"/></svg>

<!-- list container -->
<div class="a" style="left:525px;top:202px;width:231px;height:263px;background:#4a4a4a;border:1px solid #2e2e2e"></div>
<div class="a" style="left:742px;top:203px;width:13px;height:261px;background:#3c3c3c"></div>
<svg style="left:745px;top:208px" width="8" height="6"><path d="M0 5H7L3.5 0Z" fill="#8a8a8a"/></svg>
<svg style="left:745px;top:455px" width="8" height="6"><path d="M0 0H7L3.5 5Z" fill="#8a8a8a"/></svg>
<!-- thumbnails row -->
<div class="a" style="left:526px;top:203px;width:164px;height:32px;background:#e4e4e4"></div>
<div class="a" style="left:558px;top:203px;width:1px;height:32px;background:#555"></div>
<div class="a" style="left:591px;top:203px;width:1px;height:32px;background:#555"></div>
<div class="a" style="left:624px;top:203px;width:1px;height:32px;background:#555"></div>
<div class="a" style="left:657px;top:203px;width:1px;height:32px;background:#555"></div>
<div class="a" style="left:690px;top:203px;width:1px;height:32px;background:#7a7a7a"></div>
<div class="a" style="left:527px;top:204px;width:31px;height:30px;border:1.5px solid #111"></div>
<div class="a" style="left:539.3px;top:216.2px;width:5px;height:5px;border-radius:50%;background:#000"></div>
<div class="a" style="left:567.5px;top:211px;width:15.2px;height:15.2px;border-radius:50%;background:#000"></div>
<div class="a" style="left:606px;top:218px;width:3px;height:2.5px;border-radius:50%;background:#000"></div>
<div class="a" style="left:638px;top:217.3px;width:6px;height:3.2px;border-radius:50%;background:#000;transform:rotate(12deg)"></div>
<div class="a" style="left:674px;top:215.5px;width:1px;height:7px;background:#999"></div>
<!-- rows -->
<div class="a" style="left:526px;top:235px;width:215px;height:165px;background:#e4e4e4"></div>
<div class="a" style="left:526px;top:235px;width:215px;height:1px;background:#6a6a6a"></div>
<div class="a" style="left:526px;top:268px;width:215px;height:1px;background:#6a6a6a"></div>
<div class="a" style="left:526px;top:301px;width:215px;height:1px;background:#6a6a6a"></div>
<div class="a" style="left:526px;top:334px;width:215px;height:1px;background:#6a6a6a"></div>
<div class="a" style="left:526px;top:367px;width:215px;height:1px;background:#6a6a6a"></div>
<div class="a" style="left:531px;top:251px;width:163px;height:2px;background:#000"></div>
<div class="t" style="left:700px;top:246.5px;font-size:10px;color:#111">Einfach</div>
<!-- brush rows (page coords) -->
<svg style="left:0;top:0" width="800" height="600" viewBox="0 0 800 600">
<defs><filter id="bl"><feGaussianBlur stdDeviation="1.1"/></filter></defs>
<!-- charcoal -->
<path d="M533.5 283.8 L690 283.6 L700 284.5 L690 286.4 L533.5 286.6 Z" fill="#1a1a1a"/>
<rect x="533.0" y="283.7" width="1.8" height="2.9" fill="#161616"/><rect x="533.9" y="282.9" width="2.2" height="3.3" fill="#161616"/><rect x="535.1" y="282.8" width="1.3" height="3.5" fill="#161616"/><rect x="535.9" y="282.5" width="2.0" height="4.3" fill="#161616"/><rect x="536.9" y="282.8" width="2.3" height="4.5" fill="#161616"/><rect x="538.0" y="284.0" width="3.0" height="2.7" fill="#161616"/><rect x="539.1" y="283.4" width="1.5" height="2.8" fill="#161616"/><rect x="540.5" y="283.3" width="1.5" height="3.8" fill="#161616"/><rect x="541.6" y="283.2" width="2.2" height="2.7" fill="#161616"/><rect x="542.6" y="283.1" width="2.4" height="3.5" fill="#161616"/><rect x="543.8" y="283.7" width="2.0" height="3.2" fill="#161616"/><rect x="545.2" y="283.2" width="1.6" height="3.7" fill="#161616"/><rect x="546.7" y="283.9" width="2.5" height="3.2" fill="#161616"/><rect x="547.6" y="282.6" width="2.0" height="4.1" fill="#161616"/><rect x="548.8" y="283.3" width="1.3" height="3.9" fill="#161616"/><rect x="550.1" y="283.6" width="2.8" height="3.2" fill="#161616"/><rect x="551.3" y="283.6" width="2.2" height="3.5" fill="#161616"/><rect x="552.9" y="282.6" width="2.1" height="3.9" fill="#161616"/><rect x="554.2" y="283.0" width="2.4" height="4.6" fill="#161616"/><rect x="555.3" y="282.6" width="1.9" height="3.9" fill="#161616"/><rect x="556.4" y="283.1" width="1.5" height="2.8" fill="#161616"/><rect x="557.9" y="283.3" width="1.4" height="3.1" fill="#161616"/><rect x="559.4" y="283.3" width="1.3" height="3.5" fill="#161616"/><rect x="560.9" y="282.6" width="2.7" height="4.3" fill="#161616"/><rect x="562.0" y="283.3" width="1.8" height="4.4" fill="#161616"/><rect x="562.9" y="283.2" width="1.5" height="3.1" fill="#161616"/><rect x="564.1" y="282.9" width="2.3" height="3.1" fill="#161616"/><rect x="565.2" y="283.6" width="1.9" height="3.7" fill="#161616"/><rect x="566.6" y="283.3" width="2.1" height="3.8" fill="#161616"/><rect x="567.4" y="283.3" width="2.8" height="4.2" fill="#161616"/><rect x="568.9" y="282.9" width="1.9" height="3.4" fill="#161616"/><rect x="570.2" y="283.3" width="1.3" height="2.7" fill="#161616"/><rect x="571.1" y="283.1" width="1.8" height="2.7" fill="#161616"/><rect x="572.0" y="282.9" width="1.4" height="3.3" fill="#161616"/><rect x="573.5" y="283.3" width="2.3" height="2.9" fill="#161616"/><rect x="574.6" y="283.9" width="1.9" height="2.8" fill="#161616"/><rect x="576.2" y="282.8" width="2.0" height="3.6" fill="#161616"/><rect x="577.1" y="283.8" width="1.8" height="3.1" fill="#161616"/><rect x="578.0" y="282.8" width="1.2" height="4.5" fill="#161616"/><rect x="578.9" y="283.7" width="2.2" height="2.7" fill="#161616"/><rect x="580.5" y="282.8" width="2.8" height="4.0" fill="#161616"/><rect x="581.6" y="283.0" width="1.5" height="4.1" fill="#161616"/><rect x="583.0" y="283.8" width="1.8" height="3.0" fill="#161616"/><rect x="584.6" y="283.2" width="2.7" height="4.2" fill="#161616"/><rect x="586.0" y="283.0" width="1.6" height="3.6" fill="#161616"/><rect x="586.8" y="283.2" width="1.3" height="3.2" fill="#161616"/><rect x="588.2" y="283.7" width="2.9" height="3.5" fill="#161616"/><rect x="589.8" y="283.1" width="2.9" height="3.3" fill="#161616"/><rect x="590.8" y="283.6" width="1.6" height="3.0" fill="#161616"/><rect x="592.3" y="283.4" width="2.7" height="3.6" fill="#161616"/><rect x="593.7" y="283.4" width="1.4" height="3.9" fill="#161616"/><rect x="595.1" y="282.9" width="2.6" height="3.6" fill="#161616"/><rect x="596.6" y="283.4" width="1.8" height="4.2" fill="#161616"/><rect x="597.7" y="283.0" width="1.9" height="4.5" fill="#161616"/><rect x="598.6" y="284.0" width="1.4" height="2.9" fill="#161616"/><rect x="600.1" y="283.4" width="1.5" height="4.3" fill="#161616"/><rect x="601.4" y="282.8" width="1.8" height="3.7" fill="#161616"/><rect x="602.2" y="283.1" width="2.9" height="3.9" fill="#161616"/><rect x="603.8" y="283.2" width="2.0" height="4.3" fill="#161616"/><rect x="604.7" y="283.1" width="1.7" height="3.2" fill="#161616"/><rect x="606.0" y="282.9" width="1.7" height="3.4" fill="#161616"/><rect x="607.5" y="283.3" width="1.8" height="3.5" fill="#161616"/><rect x="609.0" y="282.8" width="2.0" height="4.4" fill="#161616"/><rect x="610.3" y="283.6" width="2.1" height="2.6" fill="#161616"/><rect x="611.2" y="282.6" width="1.2" height="4.2" fill="#161616"/><rect x="612.4" y="283.0" width="2.5" height="3.7" fill="#161616"/><rect x="613.6" y="282.5" width="2.2" height="4.2" fill="#161616"/><rect x="614.9" y="283.7" width="1.6" height="3.2" fill="#161616"/><rect x="616.1" y="283.4" width="2.2" height="4.1" fill="#161616"/><rect x="617.2" y="283.2" width="2.3" height="3.6" fill="#161616"/><rect x="618.6" y="283.1" width="2.0" height="3.7" fill="#161616"/><rect x="620.1" y="283.3" width="2.5" height="4.4" fill="#161616"/><rect x="621.1" y="283.1" width="2.2" height="4.5" fill="#161616"/><rect x="622.0" y="282.8" width="1.4" height="3.5" fill="#161616"/><rect x="623.0" y="283.3" width="1.3" height="3.9" fill="#161616"/><rect x="624.6" y="283.1" width="1.5" height="4.0" fill="#161616"/><rect x="625.5" y="282.5" width="2.8" height="4.5" fill="#161616"/><rect x="627.0" y="283.7" width="1.9" height="3.6" fill="#161616"/><rect x="628.5" y="283.3" width="1.5" height="3.5" fill="#161616"/><rect x="629.6" y="283.6" width="1.6" height="3.2" fill="#161616"/><rect x="630.4" y="282.8" width="2.2" height="3.5" fill="#161616"/><rect x="631.4" y="282.8" width="2.3" height="3.6" fill="#161616"/><rect x="633.0" y="282.3" width="2.6" height="4.5" fill="#161616"/><rect x="634.0" y="282.7" width="1.3" height="4.2" fill="#161616"/><rect x="635.0" y="283.1" width="2.0" height="4.4" fill="#161616"/><rect x="636.0" y="282.9" width="1.5" height="4.4" fill="#161616"/><rect x="637.3" y="283.8" width="1.4" height="2.7" fill="#161616"/><rect x="638.5" y="282.9" width="1.3" height="4.5" fill="#161616"/><rect x="639.9" y="282.4" width="1.4" height="4.3" fill="#161616"/><rect x="641.4" y="283.4" width="2.0" height="3.3" fill="#161616"/><rect x="642.9" y="283.6" width="1.7" height="2.9" fill="#161616"/><rect x="643.9" y="283.1" width="1.4" height="2.9" fill="#161616"/><rect x="644.9" y="283.7" width="1.8" height="3.2" fill="#161616"/><rect x="645.9" y="283.4" width="2.1" height="3.0" fill="#161616"/><rect x="646.7" y="283.9" width="1.7" height="2.6" fill="#161616"/><rect x="648.0" y="283.7" width="1.5" height="3.5" fill="#161616"/><rect x="648.9" y="283.3" width="2.7" height="3.5" fill="#161616"/><rect x="650.3" y="283.4" width="1.9" height="3.6" fill="#161616"/><rect x="651.9" y="283.1" width="1.8" height="4.3" fill="#161616"/><rect x="653.2" y="282.9" width="1.9" height="3.3" fill="#161616"/><rect x="654.1" y="282.7" width="1.3" height="4.1" fill="#161616"/><rect x="655.1" y="283.2" width="1.4" height="4.3" fill="#161616"/><rect x="656.4" y="283.3" width="1.7" height="3.1" fill="#161616"/><rect x="657.6" y="283.0" width="1.5" height="3.5" fill="#161616"/><rect x="659.1" y="282.9" width="3.0" height="3.7" fill="#161616"/><rect x="660.7" y="282.8" width="1.8" height="3.3" fill="#161616"/><rect x="661.8" y="282.9" width="2.1" height="3.6" fill="#161616"/><rect x="663.0" y="283.0" width="1.2" height="3.1" fill="#161616"/><rect x="664.1" y="283.5" width="1.3" height="2.6" fill="#161616"/><rect x="665.1" y="283.4" width="2.3" height="3.7" fill="#161616"/><rect x="666.4" y="282.7" width="2.5" height="4.4" fill="#161616"/><rect x="667.5" y="283.8" width="3.0" height="2.9" fill="#161616"/><rect x="668.8" y="283.3" width="1.3" height="4.3" fill="#161616"/><rect x="670.1" y="282.5" width="2.5" height="4.2" fill="#161616"/><rect x="671.3" y="283.2" width="2.1" height="4.3" fill="#161616"/><rect x="672.8" y="283.0" width="2.3" height="4.4" fill="#161616"/><rect x="674.2" y="283.3" width="1.6" height="2.7" fill="#161616"/><rect x="675.2" y="282.9" width="1.4" height="4.3" fill="#161616"/><rect x="676.5" y="283.0" width="2.3" height="4.0" fill="#161616"/><rect x="677.3" y="283.0" width="2.6" height="4.1" fill="#161616"/><rect x="678.6" y="283.9" width="2.4" height="2.7" fill="#161616"/><rect x="679.6" y="283.7" width="1.3" height="3.1" fill="#161616"/><rect x="680.5" y="282.7" width="2.5" height="4.6" fill="#161616"/><rect x="681.6" y="283.3" width="2.1" height="4.0" fill="#161616"/><rect x="682.9" y="283.3" width="2.4" height="2.8" fill="#161616"/><rect x="683.9" y="283.5" width="2.5" height="3.2" fill="#161616"/><rect x="684.8" y="283.6" width="1.3" height="3.1" fill="#161616"/><rect x="686.1" y="283.4" width="2.4" height="3.2" fill="#161616"/><rect x="687.3" y="284.0" width="2.0" height="2.8" fill="#161616"/><rect x="688.2" y="282.3" width="3.0" height="4.5" fill="#161616"/><rect x="689.4" y="282.7" width="2.7" height="4.5" fill="#161616"/><rect x="690.4" y="282.5" width="1.6" height="4.5" fill="#161616"/><rect x="691.7" y="283.6" width="1.5" height="3.6" fill="#161616"/><rect x="692.6" y="283.6" width="2.7" height="3.6" fill="#161616"/><rect x="694.0" y="282.8" width="1.6" height="4.4" fill="#161616"/><rect x="694.8" y="283.2" width="1.2" height="3.6" fill="#161616"/><rect x="695.8" y="283.2" width="1.5" height="3.3" fill="#161616"/><rect x="697.3" y="283.3" width="1.2" height="4.1" fill="#161616"/><rect x="698.2" y="283.4" width="2.9" height="4.0" fill="#161616"/><rect x="699.2" y="283.8" width="1.9" height="3.4" fill="#161616"/>
<rect x="699.5" y="284.7" width="0.9" height="0.6" fill="#222" fill-opacity="0.68"/><rect x="685.5" y="286.2" width="0.9" height="1.3" fill="#222" fill-opacity="0.91"/><rect x="693.5" y="284.2" width="1.1" height="0.8" fill="#222" fill-opacity="0.78"/><rect x="700.2" y="286.6" width="1.5" height="1.2" fill="#222" fill-opacity="0.66"/><rect x="714.1" y="286.5" width="1.5" height="1.0" fill="#222" fill-opacity="0.43"/><rect x="718.9" y="283.4" width="1.3" height="1.0" fill="#222" fill-opacity="0.35"/><rect x="720.6" y="285.5" width="0.9" height="0.6" fill="#222" fill-opacity="0.32"/><rect x="730.0" y="283.7" width="1.1" height="0.9" fill="#222" fill-opacity="0.17"/><rect x="696.1" y="285.9" width="1.6" height="0.8" fill="#222" fill-opacity="0.73"/><rect x="715.4" y="284.3" width="1.2" height="0.9" fill="#222" fill-opacity="0.41"/><rect x="689.0" y="283.8" width="0.8" height="1.3" fill="#222" fill-opacity="0.85"/><rect x="706.8" y="284.0" width="1.5" height="1.4" fill="#222" fill-opacity="0.55"/><rect x="704.3" y="283.7" width="0.8" height="0.7" fill="#222" fill-opacity="0.60"/><rect x="698.5" y="283.5" width="0.8" height="0.8" fill="#222" fill-opacity="0.69"/><rect x="710.8" y="286.4" width="1.3" height="0.9" fill="#222" fill-opacity="0.49"/><rect x="702.3" y="285.1" width="1.0" height="0.9" fill="#222" fill-opacity="0.63"/><rect x="683.4" y="284.2" width="1.6" height="0.7" fill="#222" fill-opacity="0.94"/><rect x="707.2" y="285.5" width="1.5" height="0.8" fill="#222" fill-opacity="0.55"/><rect x="694.6" y="284.1" width="1.0" height="1.0" fill="#222" fill-opacity="0.76"/><rect x="731.5" y="286.3" width="1.5" height="0.6" fill="#222" fill-opacity="0.15"/><rect x="681.7" y="285.8" width="1.5" height="1.0" fill="#222" fill-opacity="0.97"/><rect x="711.7" y="283.2" width="1.0" height="1.3" fill="#222" fill-opacity="0.47"/><rect x="724.6" y="286.3" width="1.6" height="0.8" fill="#222" fill-opacity="0.26"/><rect x="685.9" y="283.8" width="1.1" height="1.1" fill="#222" fill-opacity="0.90"/><rect x="730.8" y="285.8" width="1.2" height="1.2" fill="#222" fill-opacity="0.15"/><rect x="704.7" y="285.2" width="0.6" height="1.2" fill="#222" fill-opacity="0.59"/><rect x="692.6" y="286.5" width="1.2" height="0.8" fill="#222" fill-opacity="0.79"/><rect x="686.9" y="284.1" width="1.2" height="1.2" fill="#222" fill-opacity="0.88"/><rect x="686.1" y="283.5" width="1.1" height="1.1" fill="#222" fill-opacity="0.90"/><rect x="701.0" y="284.0" width="1.2" height="0.6" fill="#222" fill-opacity="0.65"/><rect x="696.3" y="284.9" width="1.6" height="1.1" fill="#222" fill-opacity="0.73"/><rect x="727.7" y="284.9" width="0.8" height="0.8" fill="#222" fill-opacity="0.20"/><rect x="731.9" y="285.7" width="0.9" height="0.6" fill="#222" fill-opacity="0.15"/><rect x="706.9" y="285.6" width="1.0" height="0.8" fill="#222" fill-opacity="0.55"/><rect x="716.0" y="286.5" width="0.8" height="0.6" fill="#222" fill-opacity="0.40"/><rect x="698.3" y="284.7" width="1.3" height="0.8" fill="#222" fill-opacity="0.70"/><rect x="723.0" y="285.9" width="1.1" height="0.8" fill="#222" fill-opacity="0.28"/><rect x="732.4" y="284.3" width="1.4" height="0.8" fill="#222" fill-opacity="0.15"/><rect x="692.0" y="285.9" width="0.9" height="1.4" fill="#222" fill-opacity="0.80"/><rect x="706.8" y="283.9" width="0.8" height="0.9" fill="#222" fill-opacity="0.55"/>
<!-- arrow -->
<g fill="none" stroke-linecap="round">
<path d="M559 316.3H708" stroke="#f4b488" stroke-width="2.6"/>
<path d="M571 312.5H694.5" stroke="#f0a070" stroke-width="0.9"/>
<path d="M533 314.5H733" stroke="#c8702c" stroke-width="1.1"/>
<path d="M549.5 309.8 C556 310.5 558.5 314 557.5 318 C556 322 549 326.5 543 326.5 C538 326.5 539 322.5 545 320 C549 318.5 553 317.5 559 316.3" stroke="#e07030" stroke-width="1.2"/>
<path d="M716.5 310 C710 310.5 707.5 314 708.5 318 C710 322 717 326.5 723 326.5 C728 326.5 727 322.5 721 320 C717 318.5 713 317.5 707 316.3" stroke="#e07030" stroke-width="1.2"/>
</g>
<path d="M548 308.5 L553 309 L550.5 312.5Z" fill="#e07030"/>
<path d="M718 308.5 L713 309 L715.5 312.5Z" fill="#e07030"/>
<path d="M532 314.5 L536 313 V316Z" fill="#c8702c"/>
<path d="M734 314.5 L730 313 V316Z" fill="#c8702c"/>
<!-- bristle icon -->
<path d="M541.5 348.5 L546.5 344.5 C549.8 348 549.8 355 546.5 358.5 L541.5 354.5Z" fill="#f0f0f0" stroke="#555" stroke-width="0.9"/>
<path d="M543.5 347.5 C545 350 545 353.5 543.5 356 M545.3 346.3 C547 349.5 547 354 545.3 357.3" stroke="#777" stroke-width="0.6" fill="none"/>
<rect x="534" y="348.3" width="7.5" height="6.2" fill="#6a6a6a"/>
<path d="M535.8 348.3V354.5M537.8 348.3V354.5M539.8 348.3V354.5" stroke="#9a9a9a" stroke-width="0.6"/>
<!-- bristle stroke -->
<path d="M608 349 C620 343 638 341 652 345 C666 349 676 356 690 355 C703 354 711 351 717 348" stroke="#7a7a7a" stroke-width="6" fill="none" filter="url(#bl)" stroke-linecap="round"/>
<path d="M612 348 C624 344 638 343 652 346.5 C666 350 676 355.5 690 354.5 C703 353.5 710 350.5 715 348.5" stroke="#555" stroke-width="2.2" fill="none" filter="url(#bl)"/>
<!-- pattern -->
<g stroke="#111" stroke-width="1"><path d="M558.5 368V372M591.5 368V372M624.5 368V372M657.5 368V372M690.5 368V372"/><path d="M558.5 396V400M591.5 396V400M624.5 396V400M657.5 396V400M690.5 396V400"/></g>
<path d="M534 376H633V368H649V392.7H550V400H534Z" fill="#303e60"/>
<rect x="553.3" y="383.7" width="1" height="1" fill="#8a9ab8" fill-opacity="0.33"/><rect x="536.6" y="382.3" width="1" height="1" fill="#8a9ab8" fill-opacity="0.50"/><rect x="580.4" y="380.7" width="1" height="1" fill="#8a9ab8" fill-opacity="0.31"/><rect x="645.0" y="375.0" width="1" height="1" fill="#8a9ab8" fill-opacity="0.35"/><rect x="605.6" y="379.1" width="1" height="1" fill="#8a9ab8" fill-opacity="0.36"/><rect x="540.0" y="391.3" width="1" height="1" fill="#8a9ab8" fill-opacity="0.44"/><rect x="624.6" y="382.9" width="1" height="1" fill="#8a9ab8" fill-opacity="0.77"/><rect x="606.3" y="379.0" width="1" height="1" fill="#8a9ab8" fill-opacity="0.35"/><rect x="540.2" y="388.9" width="1" height="1" fill="#8a9ab8" fill-opacity="0.75"/><rect x="537.9" y="377.8" width="1" height="1" fill="#8a9ab8" fill-opacity="0.60"/><rect x="642.9" y="370.8" width="1" height="1" fill="#8a9ab8" fill-opacity="0.45"/><rect x="578.8" y="378.7" width="1" height="1" fill="#8a9ab8" fill-opacity="0.64"/><rect x="640.8" y="373.6" width="1" height="1" fill="#8a9ab8" fill-opacity="0.67"/><rect x="575.7" y="381.3" width="1" height="1" fill="#8a9ab8" fill-opacity="0.41"/><rect x="623.6" y="383.4" width="1" height="1" fill="#8a9ab8" fill-opacity="0.43"/><rect x="553.5" y="391.1" width="1" height="1" fill="#8a9ab8" fill-opacity="0.60"/><rect x="615.7" y="380.4" width="1" height="1" fill="#8a9ab8" fill-opacity="0.54"/><rect x="551.7" y="390.7" width="1" height="1" fill="#8a9ab8" fill-opacity="0.31"/><rect x="587.7" y="392.3" width="1" height="1" fill="#8a9ab8" fill-opacity="0.64"/><rect x="631.0" y="388.6" width="1" height="1" fill="#8a9ab8" fill-opacity="0.74"/><rect x="634.3" y="382.4" width="1" height="1" fill="#8a9ab8" fill-opacity="0.75"/><rect x="618.3" y="378.7" width="1" height="1" fill="#8a9ab8" fill-opacity="0.49"/><rect x="542.3" y="380.8" width="1" height="1" fill="#8a9ab8" fill-opacity="0.78"/><rect x="546.1" y="386.2" width="1" height="1" fill="#8a9ab8" fill-opacity="0.36"/><rect x="543.3" y="388.8" width="1" height="1" fill="#8a9ab8" fill-opacity="0.42"/><rect x="608.1" y="386.7" width="1" height="1" fill="#8a9ab8" fill-opacity="0.31"/><rect x="559.3" y="386.0" width="1" height="1" fill="#8a9ab8" fill-opacity="0.51"/><rect x="623.8" y="387.3" width="1" height="1" fill="#8a9ab8" fill-opacity="0.69"/><rect x="536.8" y="398.9" width="1" height="1" fill="#8a9ab8" fill-opacity="0.40"/><rect x="636.7" y="370.7" width="1" height="1" fill="#8a9ab8" fill-opacity="0.53"/><rect x="604.8" y="388.5" width="1" height="1" fill="#8a9ab8" fill-opacity="0.68"/><rect x="634.2" y="379.1" width="1" height="1" fill="#8a9ab8" fill-opacity="0.60"/><rect x="630.1" y="387.0" width="1" height="1" fill="#8a9ab8" fill-opacity="0.71"/><rect x="557.7" y="385.3" width="1" height="1" fill="#8a9ab8" fill-opacity="0.53"/><rect x="573.8" y="383.5" width="1" height="1" fill="#8a9ab8" fill-opacity="0.34"/><rect x="597.6" y="391.5" width="1" height="1" fill="#8a9ab8" fill-opacity="0.51"/><rect x="608.6" y="387.4" width="1" height="1" fill="#8a9ab8" fill-opacity="0.41"/><rect x="572.5" y="381.8" width="1" height="1" fill="#8a9ab8" fill-opacity="0.34"/><rect x="641.1" y="391.2" width="1" height="1" fill="#8a9ab8" fill-opacity="0.74"/><rect x="647.5" y="387.6" width="1" height="1" fill="#8a9ab8" fill-opacity="0.77"/><rect x="595.6" y="381.4" width="1" height="1" fill="#8a9ab8" fill-opacity="0.77"/><rect x="639.8" y="377.3" width="1" height="1" fill="#8a9ab8" fill-opacity="0.77"/><rect x="617.1" y="377.4" width="1" height="1" fill="#8a9ab8" fill-opacity="0.56"/><rect x="619.7" y="376.8" width="1" height="1" fill="#8a9ab8" fill-opacity="0.52"/><rect x="573.7" y="391.7" width="1" height="1" fill="#8a9ab8" fill-opacity="0.67"/><rect x="568.4" y="381.2" width="1" height="1" fill="#8a9ab8" fill-opacity="0.34"/><rect x="551.6" y="392.4" width="1" height="1" fill="#8a9ab8" fill-opacity="0.65"/><rect x="634.8" y="379.9" width="1" height="1" fill="#8a9ab8" fill-opacity="0.38"/><rect x="569.9" y="382.8" width="1" height="1" fill="#8a9ab8" fill-opacity="0.56"/><rect x="596.3" y="379.5" width="1" height="1" fill="#8a9ab8" fill-opacity="0.73"/><rect x="566.8" y="382.8" width="1" height="1" fill="#8a9ab8" fill-opacity="0.74"/><rect x="626.8" y="377.5" width="1" height="1" fill="#8a9ab8" fill-opacity="0.42"/><rect x="549.1" y="385.0" width="1" height="1" fill="#8a9ab8" fill-opacity="0.57"/><rect x="557.5" y="392.6" width="1" height="1" fill="#8a9ab8" fill-opacity="0.53"/><rect x="646.6" y="369.1" width="1" height="1" fill="#8a9ab8" fill-opacity="0.39"/><rect x="535.5" y="381.8" width="1" height="1" fill="#8a9ab8" fill-opacity="0.47"/><rect x="539.9" y="385.5" width="1" height="1" fill="#8a9ab8" fill-opacity="0.35"/><rect x="626.2" y="381.4" width="1" height="1" fill="#8a9ab8" fill-opacity="0.43"/><rect x="539.1" y="381.7" width="1" height="1" fill="#8a9ab8" fill-opacity="0.61"/><rect x="549.6" y="392.3" width="1" height="1" fill="#8a9ab8" fill-opacity="0.69"/><rect x="597.5" y="376.9" width="1" height="1" fill="#8a9ab8" fill-opacity="0.38"/><rect x="536.0" y="388.6" width="1" height="1" fill="#8a9ab8" fill-opacity="0.75"/><rect x="638.2" y="383.0" width="1" height="1" fill="#8a9ab8" fill-opacity="0.63"/><rect x="603.3" y="381.3" width="1" height="1" fill="#8a9ab8" fill-opacity="0.56"/><rect x="596.9" y="381.1" width="1" height="1" fill="#8a9ab8" fill-opacity="0.48"/><rect x="551.9" y="378.1" width="1" height="1" fill="#8a9ab8" fill-opacity="0.56"/><rect x="600.1" y="385.6" width="1" height="1" fill="#8a9ab8" fill-opacity="0.54"/><rect x="566.2" y="390.7" width="1" height="1" fill="#8a9ab8" fill-opacity="0.76"/><rect x="545.8" y="389.4" width="1" height="1" fill="#8a9ab8" fill-opacity="0.49"/><rect x="644.4" y="388.6" width="1" height="1" fill="#8a9ab8" fill-opacity="0.40"/><rect x="639.9" y="373.8" width="1" height="1" fill="#8a9ab8" fill-opacity="0.49"/><rect x="629.2" y="378.1" width="1" height="1" fill="#8a9ab8" fill-opacity="0.44"/><rect x="570.5" y="380.6" width="1" height="1" fill="#8a9ab8" fill-opacity="0.44"/><rect x="549.1" y="376.0" width="1" height="1" fill="#8a9ab8" fill-opacity="0.79"/><rect x="594.5" y="391.8" width="1" height="1" fill="#8a9ab8" fill-opacity="0.72"/><rect x="534.6" y="377.0" width="1" height="1" fill="#8a9ab8" fill-opacity="0.78"/><rect x="542.0" y="376.6" width="1" height="1" fill="#8a9ab8" fill-opacity="0.54"/><rect x="564.8" y="385.5" width="1" height="1" fill="#8a9ab8" fill-opacity="0.32"/><rect x="611.6" y="388.7" width="1" height="1" fill="#8a9ab8" fill-opacity="0.37"/><rect x="540.3" y="392.3" width="1" height="1" fill="#8a9ab8" fill-opacity="0.39"/><rect x="634.6" y="369.6" width="1" height="1" fill="#8a9ab8" fill-opacity="0.78"/><rect x="595.5" y="380.2" width="1" height="1" fill="#8a9ab8" fill-opacity="0.35"/><rect x="646.7" y="375.9" width="1" height="1" fill="#8a9ab8" fill-opacity="0.48"/><rect x="643.3" y="383.5" width="1" height="1" fill="#8a9ab8" fill-opacity="0.65"/><rect x="573.7" y="391.9" width="1" height="1" fill="#8a9ab8" fill-opacity="0.69"/><rect x="599.4" y="382.9" width="1" height="1" fill="#8a9ab8" fill-opacity="0.57"/><rect x="584.9" y="385.1" width="1" height="1" fill="#8a9ab8" fill-opacity="0.72"/><rect x="557.1" y="387.0" width="1" height="1" fill="#8a9ab8" fill-opacity="0.77"/><rect x="553.3" y="376.5" width="1" height="1" fill="#8a9ab8" fill-opacity="0.40"/><rect x="540.1" y="399.3" width="1" height="1" fill="#8a9ab8" fill-opacity="0.50"/><rect x="634.4" y="371.7" width="1" height="1" fill="#8a9ab8" fill-opacity="0.31"/><rect x="648.0" y="389.9" width="1" height="1" fill="#8a9ab8" fill-opacity="0.56"/><rect x="596.1" y="382.1" width="1" height="1" fill="#8a9ab8" fill-opacity="0.37"/><rect x="603.0" y="378.3" width="1" height="1" fill="#8a9ab8" fill-opacity="0.55"/><rect x="577.0" y="378.2" width="1" height="1" fill="#8a9ab8" fill-opacity="0.48"/><rect x="630.1" y="377.2" width="1" height="1" fill="#8a9ab8" fill-opacity="0.79"/><rect x="591.6" y="391.4" width="1" height="1" fill="#8a9ab8" fill-opacity="0.47"/><rect x="608.2" y="377.0" width="1" height="1" fill="#8a9ab8" fill-opacity="0.78"/><rect x="586.1" y="383.3" width="1" height="1" fill="#8a9ab8" fill-opacity="0.57"/><rect x="594.8" y="382.1" width="1" height="1" fill="#8a9ab8" fill-opacity="0.61"/><rect x="542.0" y="381.6" width="1" height="1" fill="#8a9ab8" fill-opacity="0.72"/><rect x="632.3" y="380.3" width="1" height="1" fill="#8a9ab8" fill-opacity="0.79"/><rect x="615.8" y="379.6" width="1" height="1" fill="#8a9ab8" fill-opacity="0.45"/><rect x="592.1" y="380.8" width="1" height="1" fill="#8a9ab8" fill-opacity="0.49"/><rect x="559.3" y="379.9" width="1" height="1" fill="#8a9ab8" fill-opacity="0.61"/><rect x="570.9" y="377.1" width="1" height="1" fill="#8a9ab8" fill-opacity="0.31"/><rect x="595.5" y="391.6" width="1" height="1" fill="#8a9ab8" fill-opacity="0.71"/><rect x="584.8" y="389.8" width="1" height="1" fill="#8a9ab8" fill-opacity="0.36"/><rect x="635.2" y="380.1" width="1" height="1" fill="#8a9ab8" fill-opacity="0.54"/><rect x="636.4" y="377.2" width="1" height="1" fill="#8a9ab8" fill-opacity="0.39"/><rect x="628.7" y="387.2" width="1" height="1" fill="#8a9ab8" fill-opacity="0.34"/><rect x="537.2" y="379.2" width="1" height="1" fill="#8a9ab8" fill-opacity="0.30"/><rect x="565.5" y="380.4" width="1" height="1" fill="#8a9ab8" fill-opacity="0.56"/><rect x="583.7" y="388.1" width="1" height="1" fill="#8a9ab8" fill-opacity="0.63"/><rect x="646.6" y="390.1" width="1" height="1" fill="#8a9ab8" fill-opacity="0.34"/><rect x="584.8" y="392.1" width="1" height="1" fill="#8a9ab8" fill-opacity="0.80"/><rect x="589.2" y="381.5" width="1" height="1" fill="#8a9ab8" fill-opacity="0.75"/><rect x="629.0" y="378.6" width="1" height="1" fill="#8a9ab8" fill-opacity="0.51"/><rect x="557.2" y="380.5" width="1" height="1" fill="#8a9ab8" fill-opacity="0.34"/><rect x="641.5" y="384.8" width="1" height="1" fill="#8a9ab8" fill-opacity="0.59"/><rect x="596.0" y="377.1" width="1" height="1" fill="#8a9ab8" fill-opacity="0.79"/><rect x="610.1" y="384.9" width="1" height="1" fill="#8a9ab8" fill-opacity="0.40"/><rect x="549.3" y="385.0" width="1" height="1" fill="#8a9ab8" fill-opacity="0.61"/><rect x="574.8" y="392.6" width="1" height="1" fill="#8a9ab8" fill-opacity="0.75"/><rect x="632.6" y="391.6" width="1" height="1" fill="#8a9ab8" fill-opacity="0.40"/><rect x="540.9" y="381.9" width="1" height="1" fill="#8a9ab8" fill-opacity="0.46"/><rect x="641.8" y="371.8" width="1" height="1" fill="#8a9ab8" fill-opacity="0.76"/><rect x="591.4" y="380.3" width="1" height="1" fill="#8a9ab8" fill-opacity="0.73"/><rect x="580.2" y="380.5" width="1" height="1" fill="#8a9ab8" fill-opacity="0.39"/><rect x="562.8" y="376.4" width="1" height="1" fill="#8a9ab8" fill-opacity="0.65"/><rect x="559.3" y="382.1" width="1" height="1" fill="#8a9ab8" fill-opacity="0.58"/><rect x="562.2" y="390.4" width="1" height="1" fill="#8a9ab8" fill-opacity="0.41"/><rect x="611.1" y="387.5" width="1" height="1" fill="#8a9ab8" fill-opacity="0.39"/><rect x="620.4" y="380.6" width="1" height="1" fill="#8a9ab8" fill-opacity="0.57"/><rect x="602.7" y="388.1" width="1" height="1" fill="#8a9ab8" fill-opacity="0.52"/><rect x="540.4" y="393.2" width="1" height="1" fill="#8a9ab8" fill-opacity="0.73"/><rect x="590.4" y="386.5" width="1" height="1" fill="#8a9ab8" fill-opacity="0.43"/><rect x="637.3" y="389.9" width="1" height="1" fill="#8a9ab8" fill-opacity="0.41"/><rect x="616.4" y="378.8" width="1" height="1" fill="#8a9ab8" fill-opacity="0.67"/><rect x="588.9" y="385.3" width="1" height="1" fill="#8a9ab8" fill-opacity="0.73"/><rect x="585.4" y="383.8" width="1" height="1" fill="#8a9ab8" fill-opacity="0.59"/><rect x="544.8" y="392.4" width="1" height="1" fill="#8a9ab8" fill-opacity="0.58"/><rect x="635.7" y="385.3" width="1" height="1" fill="#8a9ab8" fill-opacity="0.79"/><rect x="630.1" y="391.9" width="1" height="1" fill="#8a9ab8" fill-opacity="0.45"/><rect x="535.2" y="389.7" width="1" height="1" fill="#8a9ab8" fill-opacity="0.67"/><rect x="574.3" y="383.3" width="1" height="1" fill="#8a9ab8" fill-opacity="0.58"/><rect x="562.7" y="390.3" width="1" height="1" fill="#8a9ab8" fill-opacity="0.58"/><rect x="597.7" y="378.2" width="1" height="1" fill="#8a9ab8" fill-opacity="0.66"/><rect x="553.8" y="380.6" width="1" height="1" fill="#8a9ab8" fill-opacity="0.40"/><rect x="581.0" y="386.4" width="1" height="1" fill="#8a9ab8" fill-opacity="0.35"/><rect x="540.3" y="383.4" width="1" height="1" fill="#8a9ab8" fill-opacity="0.40"/>
<path d="M539.5 400V381.5H644.4V368" stroke="#f0f0f0" stroke-width="1" stroke-dasharray="2.2 1.6" fill="none"/>
<path d="M545 400V387.3H639V368" stroke="#e8a070" stroke-width="0.9" stroke-dasharray="2.2 1.6" fill="none"/>
<path d="M558.5 376V392.7M591.5 376V392.7M624.5 376V392.7" stroke="#c8d0e0" stroke-width="0.9"/>
</svg>
<!-- footer -->
<div class="a" style="left:520px;top:484px;width:239px;height:1px;background:#2a2a2a"></div>
<div class="a" style="left:520px;top:485px;width:239px;height:6px;background:#444"></div>
<div class="a" style="left:629px;top:486px;width:22px;height:4px;background:repeating-linear-gradient(90deg,#111 0 1px,transparent 1px 2px)"></div>
<div class="t" style="left:558px;top:345.5px;font-size:9.5px;color:#111">6,00</div>
<svg style="left:0;top:0" width="800" height="600" viewBox="0 0 800 600">
<g fill="#c4c4c4">
<rect x="529" y="469.5" width="2.2" height="9.3"/><rect x="532" y="469" width="2.8" height="9.8"/>
<path d="M535 470.5 L536.5 470 L540 478.3 L538.5 478.8Z"/>
<path d="M541 476.5H546L543.5 479.5Z"/>
</g>
<g stroke="#c4c4c4" fill="none">
<path d="M644 469.3L654 479" stroke-width="1.2"/><path d="M653.7 469.5L648 475.5" stroke-width="1.5"/>
</g>
<path d="M643 478.5 C643.5 476 646 474.5 648.5 475.5 C649 477 648 479 646 479Z" fill="#b8b8b8"/>
<rect x="669.5" y="469.3" width="9.2" height="9" fill="none" stroke="#c8c8c8" stroke-width="1.4"/>
<g fill="#c8c8c8"><rect x="671.5" y="471.5" width="1" height="1"/><rect x="673.5" y="471.5" width="3.5" height="1"/><rect x="671.5" y="473.5" width="1" height="1"/><rect x="673.5" y="473.5" width="3.5" height="1"/><rect x="671.5" y="475.5" width="1" height="1"/><rect x="673.5" y="475.5" width="3.5" height="1"/></g>
<path d="M696 470H706.2V480.2H701L696 475.2Z" fill="#cacaca"/>
<path d="M696.5 476.8L699.8 480.2H696.5Z" fill="#bdbdbd"/>
<path d="M721.5 471.5H732M725 471.5V469.5H728.5V471.5" stroke="#c4c4c4" stroke-width="1.3" fill="none"/>
<path d="M722.5 473H731V480H722.5Z" fill="none" stroke="#c4c4c4" stroke-width="1.2"/>
<path d="M725 474V479.5M726.8 474V479.5M728.6 474V479.5" stroke="#c4c4c4" stroke-width="0.9"/>
<g fill="#1a1a1a"><rect x="757" y="473" width="1.2" height="1.2"/><rect x="755" y="475" width="1.2" height="1.2"/><rect x="757" y="475" width="1.2" height="1.2"/><rect x="753" y="477" width="1.2" height="1.2"/><rect x="755" y="477" width="1.2" height="1.2"/><rect x="757" y="477" width="1.2" height="1.2"/><rect x="751" y="479" width="1.2" height="1.2"/><rect x="753" y="479" width="1.2" height="1.2"/><rect x="755" y="479" width="1.2" height="1.2"/><rect x="757" y="479" width="1.2" height="1.2"/><rect x="749" y="481" width="1.2" height="1.2"/><rect x="751" y="481" width="1.2" height="1.2"/><rect x="753" y="481" width="1.2" height="1.2"/><rect x="755" y="481" width="1.2" height="1.2"/><rect x="757" y="481" width="1.2" height="1.2"/></g>
</svg>
<div class="a" style="left:686px;top:458px;width:32px;height:30px;border:3px solid #e00a0a"></div>
</body></html>
